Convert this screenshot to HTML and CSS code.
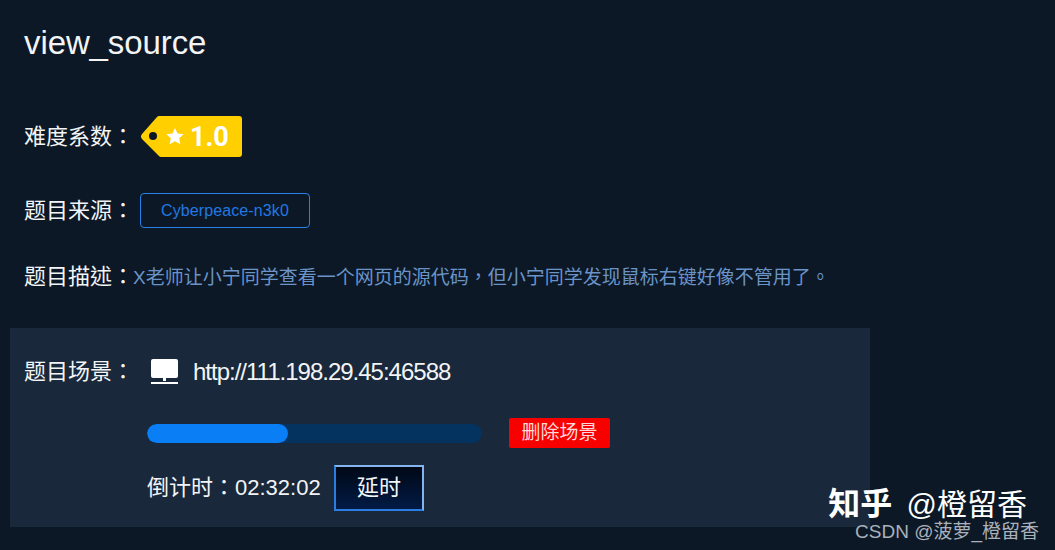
FILE: index.html
```html
<!DOCTYPE html>
<html lang="zh-Hant">
<head>
<meta charset="utf-8">
<title>view_source</title>
<link rel="stylesheet" href="styles.css">
</head>
<body>
<main class="page">
  <h1 class="title">view_source</h1>
  <div class="row row-difficulty">
    <span class="label">难度系数：</span>
    <span class="tag">
      <svg class="tag-shape" viewBox="0 0 103 43" aria-hidden="true"><path fill="#ffcf00" d="M19 1H99a3 3 0 0 1 3 3V39a3 3 0 0 1-3 3H21a3 3 0 0 1-2-1L2 24a4 4 0 0 1 0-5L17 2a3 3 0 0 1 2-1Z"/><circle cx="13" cy="21" r="4" fill="#0d1826"/><path fill="#fff" d="M35 13l2.600 5.500 6 .7-4.400 4.100 1.200 5.900-5.400-3-5.400 3 1.200-5.900-4.400-4.100 6-.7Z"/></svg>
      <span class="tag-text">1.0</span>
    </span>
  </div>
  <div class="row row-source">
    <span class="label">题目来源：</span>
    <span class="source">Cyberpeace-n3k0</span>
  </div>
  <div class="row row-desc">
    <span class="label label-tight">题目描述：</span>
    <span class="desc">X老师让小宁同学查看一个网页的源代码，但小宁同学发现鼠标右键好像不管用了。</span>
  </div>
  <section class="panel">
    <div class="row row-url">
      <span class="label">题目场景：</span>
      <svg class="monitor" viewBox="0 0 27 26" aria-hidden="true"><path fill="#fff" d="M2 0H25a2 2 0 0 1 2 2V17a2 2 0 0 1-2 2H2a2 2 0 0 1-2-2V2a2 2 0 0 1 2-2Z"/><path fill="#fff" d="M12 19h3v3h-3Z"/><path fill="#fff" d="M0 23h27v2H0Z"/></svg>
      <span class="url">http://111.198.29.45:46588</span>
    </div>
    <div class="controls">
      <div class="progress-row">
        <div class="track"><div class="fill"></div></div>
        <button class="del" type="button">删除场景</button>
      </div>
      <div class="time-row">
        <span class="time">倒计时：02:32:02</span>
        <button class="extend" type="button">延时</button>
      </div>
    </div>
  </section>
  <div class="marks">
    <div class="zhihu"><span class="zhihu-brand">知乎</span> @橙留香</div>
    <div class="csdn">CSDN @菠萝_橙留香</div>
  </div>
</main>
</body>
</html>
```
FILE: styles.css
```css
* { box-sizing: border-box; }
html, body { margin: 0; height: 100%; }
body {
  background: #0d1826;
  color: #f2f4f6;
  font-family: "Liberation Sans", "Noto Sans CJK TC", sans-serif;
  overflow: hidden;
}
.page { position: relative; width: 1055px; height: 550px; padding-top: 20px; }
.title {
  margin: 0 0 0 24px;
  font-size: 33px;
  line-height: 46px;
  font-weight: 400;
  letter-spacing: -.1px;
}
.row { display: flex; align-items: center; padding-left: 24px; }
.label { font-size: 22px; line-height: 30px; width: 116px; flex: none; white-space: nowrap; }
.label-tight { width: 109px; }
.row-difficulty { margin-top: 49px; height: 43px; }
.tag { position: relative; display: block; width: 103px; height: 43px; }
.tag-shape { display: block; width: 103px; height: 43px; }
.tag-text {
  position: absolute;
  left: 50px;
  top: 6px;
  font: 700 27px/33px Roboto, sans-serif;
  color: #fff;
}
.row-source { margin-top: 35px; height: 35px; }
.source {
  width: 170px;
  height: 35px;
  border: 1px solid #2680e6;
  border-radius: 4px;
  color: #2079e2;
  font-size: 16px;
  line-height: 33px;
  text-align: center;
  letter-spacing: .1px;
}
.row-desc { margin-top: 34px; height: 30px; }
.desc { color: #6a94c8; font-size: 19px; line-height: 30px; margin-top: 2px; white-space: nowrap; }
.panel {
  margin: 36px 0 0 10px;
  width: 860px;
  height: 199px;
  background: #19283a;
  padding-top: 29px;
}
.panel .row { padding-left: 14px; }
.row-url { height: 30px; }
.monitor { width: 27px; height: 26px; flex: none; margin: 0 15px 0 11px; }
.url { font-size: 24px; line-height: 30px; letter-spacing: -1px; }
.controls { padding: 0 0 0 137px; }
.progress-row { display: flex; align-items: center; margin-top: 31px; height: 30px; }
.track { width: 335px; height: 19px; border-radius: 10px; background: #04335f; overflow: hidden; }
.fill { width: 141px; height: 100%; border-radius: 10px; background: #0a7ff5; }
.del {
  margin: 0 0 0 27px;
  padding: 0;
  width: 101px;
  height: 30px;
  border: 0;
  border-radius: 2px;
  background: #f90000;
  color: #ffd9d9;
  font: 19px/30px "Liberation Sans", "Noto Sans CJK TC", sans-serif;
}
.time-row { display: flex; align-items: center; margin-top: 17px; height: 46px; }
.time { font-size: 22px; line-height: 30px; width: 187px; white-space: nowrap; }
.extend {
  width: 90px;
  height: 46px;
  padding: 0;
  border: 2px solid #2a7de1;
  border-top-color: #84b4ee;
  border-right-color: #84b4ee;
  background: linear-gradient(#000816, #021b45);
  color: #f2f4f6;
  font: 22px/42px "Liberation Sans", "Noto Sans CJK TC", sans-serif;
}
.marks { position: absolute; right: 16px; top: 486px; text-align: right; }
.zhihu { color: #fff; font-size: 30px; line-height: 36px; margin-right: 12px; word-spacing: 6px; white-space: nowrap; }
.zhihu-brand { font-size: 32px; font-weight: 700; }
.csdn { color: #a9b1bb; font-size: 19px; line-height: 22px; margin-top: -2px; }
```
